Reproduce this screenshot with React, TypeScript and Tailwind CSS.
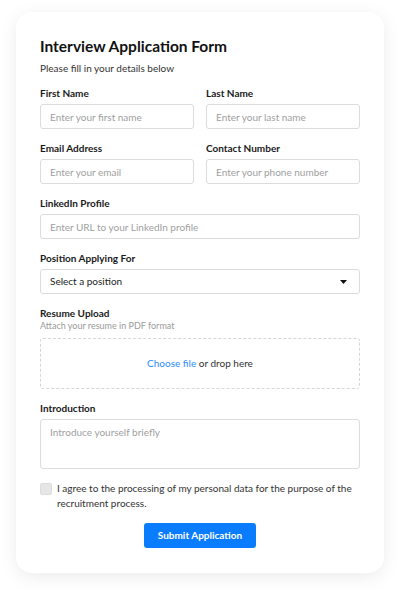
import React from 'react';

const font = { fontFamily: 'Lato, "Open Sans", sans-serif' };

const Label: React.FC<{ children: React.ReactNode }> = ({ children }) => (
  <label className="block text-[10px] leading-[14px] font-bold text-[#1a1a1a] mb-1">{children}</label>
);

const Input: React.FC<{ placeholder: string }> = ({ placeholder }) => (
  <input
    placeholder={placeholder}
    className="block w-full h-[25px] rounded-[3px] border border-[#dcdcdc] px-[9px] text-[10px] text-[#333] placeholder:text-[#a0a0a0] outline-none"
  />
);

export default function App() {
  return (
    <div className="min-h-[592px] bg-white px-4 pt-3 pb-5" style={font}>
      <form className="rounded-2xl bg-white px-6 pt-6 pb-[25px] shadow-[0_4px_18px_rgba(0,0,0,0.08)]">
        <h1 className="text-[15.5px] leading-[20px] font-bold text-[#111]">Interview Application Form</h1>
        <p className="mt-1 text-[10px] leading-[16px] text-[#333]">Please fill in your details below</p>

        <div className="mt-[10px] grid grid-cols-2 gap-x-3 gap-y-3">
          <div>
            <Label>First Name</Label>
            <Input placeholder="Enter your first name" />
          </div>
          <div>
            <Label>Last Name</Label>
            <Input placeholder="Enter your last name" />
          </div>
          <div>
            <Label>Email Address</Label>
            <Input placeholder="Enter your email" />
          </div>
          <div>
            <Label>Contact Number</Label>
            <Input placeholder="Enter your phone number" />
          </div>
        </div>

        <div className="mt-3">
          <Label>LinkedIn Profile</Label>
          <Input placeholder="Enter URL to your LinkedIn profile" />
        </div>

        <div className="mt-3">
          <Label>Position Applying For</Label>
          <div className="flex h-[25px] items-center justify-between rounded-[3px] border border-[#dcdcdc] pl-[9px] pr-[12px] text-[10px] text-[#222]">
            <span>Select a position</span>
            <svg width="7" height="4" viewBox="0 0 7 4">
              <path d="M0 0h7L3.5 4z" fill="#111" />
            </svg>
          </div>
        </div>

        <div className="mt-3">
          <label className="block text-[10px] leading-[14px] font-bold text-[#1a1a1a]">Resume Upload</label>
          <p className="text-[9px] leading-[12px] text-[#9a9a9a]">Attach your resume in PDF format</p>
          <div className="mt-[6px] flex h-[51px] items-center justify-center rounded-[3px] border border-dashed border-[#d6d6d6] text-[10px] text-[#333]">
            <span>
              <span className="text-[#2b8cff]">Choose file</span> or drop here
            </span>
          </div>
        </div>

        <div className="mt-3">
          <Label>Introduction</Label>
          <textarea
            placeholder="Introduce yourself briefly"
            className="block w-full h-[50px] resize-none rounded-[3px] border border-[#dcdcdc] px-[9px] py-[5px] text-[10px] leading-[14px] text-[#333] placeholder:text-[#a0a0a0] outline-none"
          />
        </div>

        <div className="mt-3 flex items-start gap-[5px]">
          <span className="mt-[2px] h-[12px] w-[12px] shrink-0 rounded-[2px] border border-[#dcdcdc] bg-[#e6e6e6]" />
          <p className="text-[10px] leading-[15px] text-[#333]">
            I agree to the processing of my personal data for the purpose of the recruitment process.
          </p>
        </div>

        <div className="mt-3 flex justify-center">
          <button
            type="button"
            className="h-[25px] w-[112px] rounded-[3px] bg-[#0a7cff] text-[10px] font-bold text-white"
          >
            Submit Application
          </button>
        </div>
      </form>
    </div>
  );
}
